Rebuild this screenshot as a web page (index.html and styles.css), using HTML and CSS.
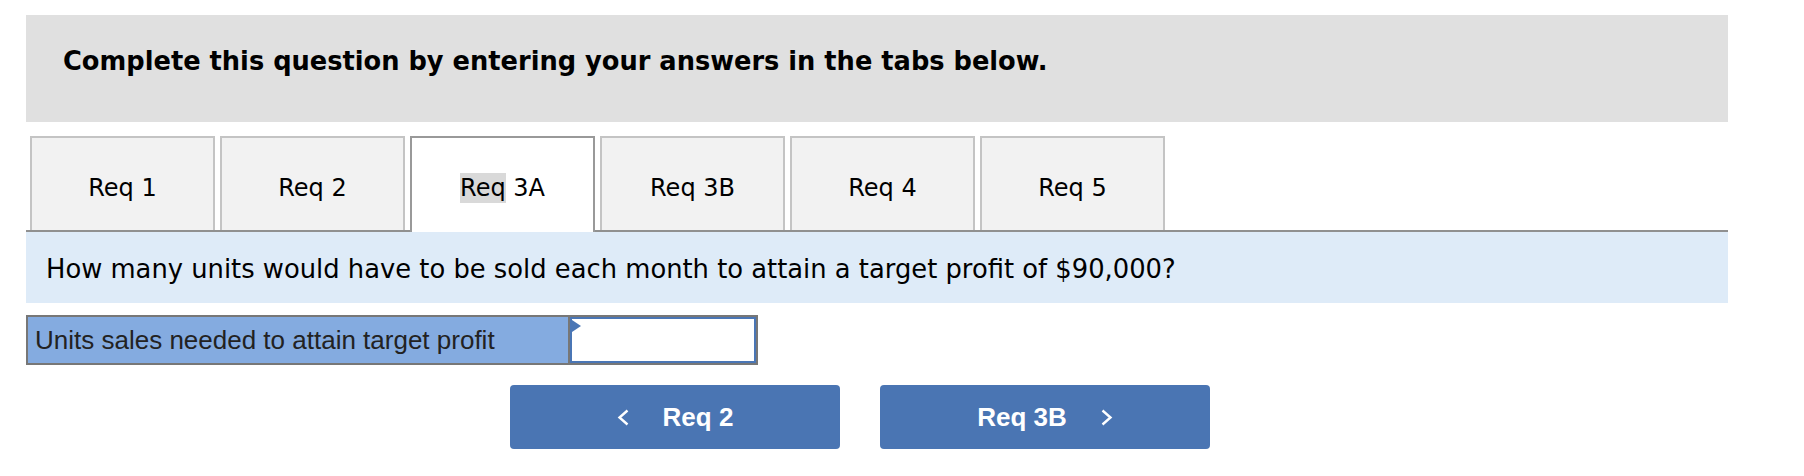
FILE: index.html
```html
<!DOCTYPE html>
<html lang="en">
<head>
    <meta charset="UTF-8">
    <meta name="viewport" content="width=device-width, initial-scale=1.0">
    <title>Req 3A</title>
    <link rel="stylesheet" href="styles.css">
</head>
<body>
    <div class="question">
        <div class="instructions">
            <strong>Complete this question by entering your answers in the tabs below.</strong>
        </div>

        <ul class="tabs">
            <li class="tab"><span>Req 1</span></li>
            <li class="tab"><span>Req 2</span></li>
            <li class="tab active"><span><span class="hl">Req</span> 3A</span></li>
            <li class="tab"><span>Req 3B</span></li>
            <li class="tab"><span>Req 4</span></li>
            <li class="tab"><span>Req 5</span></li>
        </ul>

        <div class="prompt">How many units would have to be sold each month to attain a target profit of $90,000?</div>

        <div class="answer-row">
            <div class="answer-label">Units sales needed to attain target profit</div>
            <div class="answer-cell">
                <input type="text" class="answer-input" aria-label="Units sales needed to attain target profit">
            </div>
        </div>

        <div class="nav">
            <a href="#req2" class="nav-btn">
                <svg class="chev" width="12" height="17" viewBox="0 0 12 17"><polyline points="10.5,1.5 2.5,8.5 10.5,15.5" /></svg>
                <span>Req 2</span>
            </a>
            <a href="#req3b" class="nav-btn">
                <span>Req 3B</span>
                <svg class="chev" width="12" height="17" viewBox="0 0 12 17"><polyline points="1.5,1.5 9.5,8.5 1.5,15.5" /></svg>
            </a>
        </div>
    </div>
</body>
</html>
```

FILE: styles.css
```css
* {
    margin: 0;
    padding: 0;
    box-sizing: border-box;
}

body {
    background: #fff;
    color: #000;
    font-family: "DejaVu Sans", Verdana, sans-serif;
}

.question {
    width: 1702px;
    margin: 15px 0 0 26px;
}

/* Instructions band */
.instructions {
    background: #e0e0e0;
    height: 107px;
    padding: 31px 0 0 37px;
    font-size: 25.7px;
    line-height: 30px;
}

/* Tabs */
.tabs {
    list-style: none;
    display: flex;
    gap: 5px;
    margin-top: 14px;
    padding-left: 4px;
    border-bottom: 2px solid #909090;
}

.tab {
    width: 185px;
    height: 94px;
    display: flex;
    align-items: center;
    justify-content: center;
    padding-top: 7px;
    background: #f2f2f2;
    border: 2px solid #c4c4c4;
    border-bottom: none;
    font-size: 24px;
}

.tab.active {
    background: #fff;
    border-color: #999;
    height: 96px;
    margin-bottom: -2px;
    padding-top: 5px;
}

.hl {
    background: #d9d9d9;
    padding: 1px 0;
}

/* Prompt */
.prompt {
    background: #deebf8;
    height: 71px;
    display: flex;
    align-items: center;
    padding-left: 20px;
    padding-top: 2px;
    font-size: 25.8px;
}

/* Answer row */
.answer-row {
    display: flex;
    width: 732px;
    height: 50px;
    margin-top: 12px;
    border: 2px solid #777;
}

.answer-label {
    width: 540px;
    background: #84abe0;
    display: flex;
    align-items: center;
    padding-left: 7px;
    font-family: "Liberation Sans", Arial, sans-serif;
    font-size: 26px;
    color: #222;
}

.answer-cell {
    flex: 1;
    position: relative;
    border-left: 2px solid #777;
}

.answer-cell::before {
    content: '';
    position: absolute;
    top: 3px;
    left: 2px;
    border-left: 9px solid #4a76b5;
    border-top: 6px solid transparent;
    border-bottom: 6px solid transparent;
}

.answer-input {
    width: 100%;
    height: 100%;
    border: 2px solid #4a76b5;
    outline: none;
    background: #fff;
}

/* Navigation buttons */
.nav {
    display: flex;
    gap: 40px;
    margin-top: 20px;
    padding-left: 484px;
}

.nav-btn {
    width: 330px;
    height: 64px;
    display: flex;
    align-items: center;
    justify-content: center;
    gap: 34px;
    background: #4a75b3;
    border-radius: 4px;
    color: #fff;
    text-decoration: none;
    font-family: "Liberation Sans", Arial, sans-serif;
    font-weight: bold;
    font-size: 26px;
}

.chev polyline {
    fill: none;
    stroke: #fff;
    stroke-width: 2.4;
}
```
